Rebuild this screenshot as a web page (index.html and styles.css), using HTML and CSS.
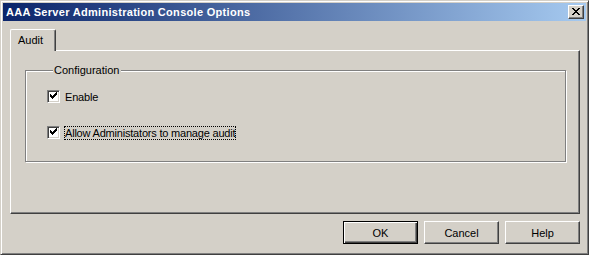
FILE: index.html
```html
<!DOCTYPE html>
<html lang="en">
<head>
    <meta charset="UTF-8">
    <title>AAA Server Administration Console Options</title>
    <link rel="stylesheet" href="styles.css">
</head>
<body>
    <div class="window">
        <div class="titlebar">
            <span class="title">AAA Server Administration Console Options</span>
            <span class="close-btn">
                <svg width="8" height="7" viewBox="0 0 8 7" shape-rendering="crispEdges">
                    <path d="M0 0h2v1h-2zM6 0h2v1h-2zM1 1h2v1h-2zM5 1h2v1h-2zM2 2h4v1h-4zM3 3h2v1h-2zM2 4h4v1h-4zM1 5h2v1h-2zM5 5h2v1h-2zM0 6h2v1h-2zM6 6h2v1h-2z" fill="#000"/>
                </svg>
            </span>
        </div>

        <div class="dialog-body">
            <div class="tabs">
                <div class="tab active">Audit</div>
            </div>
            <div class="tab-panel">
                <fieldset class="group">
                    <legend>Configuration</legend>
                    <div class="check-row">
                        <span class="checkbox checked"></span>
                        <span class="check-label">Enable</span>
                    </div>
                    <div class="check-row">
                        <span class="checkbox checked"></span>
                        <span class="check-label focused">Allow Administators to manage audit</span>
                    </div>
                </fieldset>
            </div>
            <div class="buttons">
                <button class="btn default">OK</button>
                <button class="btn">Cancel</button>
                <button class="btn">Help</button>
            </div>
        </div>
    </div>
</body>
</html>
```

FILE: styles.css
```css
body {
    margin: 0;
    font-family: "Liberation Sans", Arial, sans-serif;
    font-size: 11px;
    color: #000;
}
.window {
    width: 589px;
    height: 255px;
    box-sizing: border-box;
    background: #d4d0c8;
    border: 1px solid;
    border-color: #d4d0c8 #404040 #404040 #d4d0c8;
    box-shadow: inset 1px 1px 0 #fff, inset -1px -1px 0 #808080;
    padding: 2px;
    display: flex;
    flex-direction: column;
}
.titlebar {
    height: 18px;
    background: linear-gradient(to right, #0a246a, #a6caf0);
    display: flex;
    align-items: center;
    justify-content: space-between;
    padding: 0 2px 0 3px;
}
.title {
    color: #fff;
    font-weight: bold;
    font-size: 11px;
    letter-spacing: 0.3px;
}
.close-btn {
    width: 16px;
    height: 14px;
    box-sizing: border-box;
    background: #d4d0c8;
    border: 1px solid;
    border-color: #fff #404040 #404040 #fff;
    box-shadow: inset -1px -1px 0 #808080;
    display: flex;
    align-items: center;
    justify-content: center;
    padding-bottom: 1px;
}
.dialog-body {
    flex: 1;
    display: flex;
    flex-direction: column;
    padding: 8px 6px 0 7px;
}
.tabs {
    display: flex;
    height: 21px;
}
.tab {
    width: 46px;
    box-sizing: border-box;
    border: 1px solid;
    border-color: #fff #404040 transparent #fff;
    border-bottom: none;
    border-radius: 2px 2px 0 0;
    box-shadow: inset -1px 0 0 #808080;
    padding: 4px 0 0 7px;
    margin-bottom: -1px;
    background: #d4d0c8;
    position: relative;
    z-index: 1;
}
.tab-panel {
    height: 164px;
    box-sizing: border-box;
    border: 1px solid;
    border-color: #fff #404040 #404040 #fff;
    box-shadow: inset -1px -1px 0 #808080;
    padding: 13px 13px 0 14px;
}
.group {
    margin: 0;
    height: 98px;
    box-sizing: border-box;
    border: 1px solid #808080;
    box-shadow: inset 1px 1px 0 #fff, 1px 1px 0 #fff;
    padding: 13px 0 0 21px;
}
.group legend {
    padding: 0 2px 0 1px;
    margin-left: 6px;
    background: #d4d0c8;
}
.check-row {
    display: flex;
    align-items: center;
    height: 15px;
    margin-bottom: 21px;
}
.checkbox {
    width: 13px;
    height: 13px;
    box-sizing: border-box;
    background: #fff;
    border: 1px solid;
    border-color: #808080 #fff #fff #808080;
    box-shadow: inset 1px 1px 0 #404040, inset -1px -1px 0 #d4d0c8;
    position: relative;
}
.checkbox.checked::after {
    content: "";
    position: absolute;
    left: 2px;
    top: 1px;
    width: 7px;
    height: 7px;
    background: url("data:image/svg+xml,%3Csvg xmlns='http://www.w3.org/2000/svg' width='7' height='7' shape-rendering='crispEdges'%3E%3Cpath d='M6 0h1v3h-1zM5 1h1v3h-1zM4 2h1v3h-1zM3 3h1v3h-1zM2 4h1v3h-1zM1 3h1v3h-1zM0 2h1v3h-1z' fill='%23000'/%3E%3C/svg%3E") no-repeat;
}
.check-label {
    margin-left: 4px;
    padding: 1px;
    letter-spacing: -0.2px;
}
.check-label.focused {
    outline: 1px dotted #000;
    outline-offset: -1px;
}
.buttons {
    display: flex;
    justify-content: flex-end;
    gap: 6px;
    margin-top: 7px;
}
.btn {
    width: 75px;
    height: 23px;
    box-sizing: border-box;
    font-family: "Liberation Sans", Arial, sans-serif;
    font-size: 11px;
    color: #000;
    background: #d4d0c8;
    border: 1px solid;
    border-color: #fff #404040 #404040 #fff;
    box-shadow: inset -1px -1px 0 #808080;
    padding: 0;
    margin: 0;
}
.btn.default {
    border: 1px solid #000;
    box-shadow: inset 1px 1px 0 #fff, inset -1px -1px 0 #404040, inset -2px -2px 0 #808080;
}
```
